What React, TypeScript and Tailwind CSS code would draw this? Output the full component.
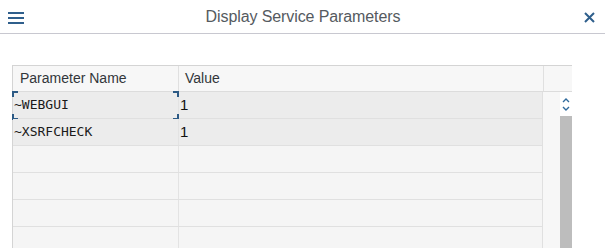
import React from 'react';

const rows = [
  { name: '~WEBGUI', value: '1' },
  { name: '~XSRFCHECK', value: '1' },
  { name: '', value: '' },
  { name: '', value: '' },
  { name: '', value: '' },
  { name: '', value: '' },
];

const Corner: React.FC<{ className: string }> = ({ className }) => (
  <span className={`absolute w-[6px] h-[6px] border-[#2c5a85] ${className}`} />
);

export default function App() {
  return (
    <div className="w-[605px] h-[248px] overflow-hidden bg-white font-['Liberation_Sans',Arial,sans-serif]">
      <header className="h-[34px] border-b border-[#c8c8d0] flex items-center justify-between px-[8px]">
        <svg width="16" height="12" viewBox="0 0 16 12" className="mt-[2px]">
          <rect x="0" y="0" width="16" height="2" fill="#2f5f8c" />
          <rect x="0" y="5" width="16" height="2" fill="#2f5f8c" />
          <rect x="0" y="10" width="16" height="2" fill="#2f5f8c" />
        </svg>
        <h1 className="text-[16px] text-[#555a60] tracking-[-0.1px] mr-[2px]">Display Service Parameters</h1>
        <svg width="11" height="11" viewBox="0 0 11 11" className="mr-[2px] mt-[1px]">
          <path d="M1 1 L10 10 M10 1 L1 10" stroke="#2f5f8c" strokeWidth="2" />
        </svg>
      </header>

      <div className="mt-[31px] ml-[12px] w-[560px] border-t border-l border-[#d4d4d4] bg-[#f7f7f7]">
        <div className="flex h-[26px] border-b border-[#dcdcdc] text-[14px] text-[#32363a]">
          <div className="w-[166px] border-r border-[#e0e0e0] pl-[7px] flex items-center">Parameter Name</div>
          <div className="w-[365px] border-r border-[#e0e0e0] pl-[6px] flex items-center">Value</div>
          <div className="flex-1" />
        </div>

        <div className="flex">
          <div className="w-[531px] border-r border-[#e0e0e0]">
            {rows.map((r, i) => (
              <div
                key={i}
                className={`relative flex h-[27px] border-b border-[#e0e0e0] font-['DejaVu_Sans_Mono',monospace] text-[13px] text-[#1a1a1a] ${i < 2 ? 'bg-[#ececec]' : 'bg-[#f5f5f5]'}`}
              >
                <div className="relative w-[166px] border-r border-[#e3e3e3] pl-[1px] flex items-center">
                  {r.name}
                  {i === 0 && (
                    <>
                      <Corner className="-left-[1px] -top-[1px] border-l-2 border-t-2" />
                      <Corner className="-right-[1px] -top-[1px] border-r-2 border-t-2" />
                      <Corner className="-left-[1px] -bottom-[2px] border-l-2 border-b-2" />
                      <Corner className="-right-[1px] -bottom-[2px] border-r-2 border-b-2" />
                    </>
                  )}
                </div>
                <div className="flex-1 flex items-center pl-[1px] font-['Liberation_Sans',Arial,sans-serif] text-[15px] text-[#111]">
                  {r.value}
                </div>
              </div>
            ))}
          </div>
          <div className="w-[17px]" />
          <div className="w-[12px] flex flex-col">
            <div className="h-[24px] bg-white flex flex-col items-center justify-center gap-[3px]">
              <svg width="8" height="5" viewBox="0 0 8 5">
                <path d="M1 4 L4 1 L7 4" fill="none" stroke="#2f6a9c" strokeWidth="1.4" />
              </svg>
              <svg width="8" height="5" viewBox="0 0 8 5">
                <path d="M1 1 L4 4 L7 1" fill="none" stroke="#2f6a9c" strokeWidth="1.4" />
              </svg>
            </div>
            <div className="flex-1 bg-[#bdbdbd]" />
          </div>
        </div>
      </div>
    </div>
  );
}
